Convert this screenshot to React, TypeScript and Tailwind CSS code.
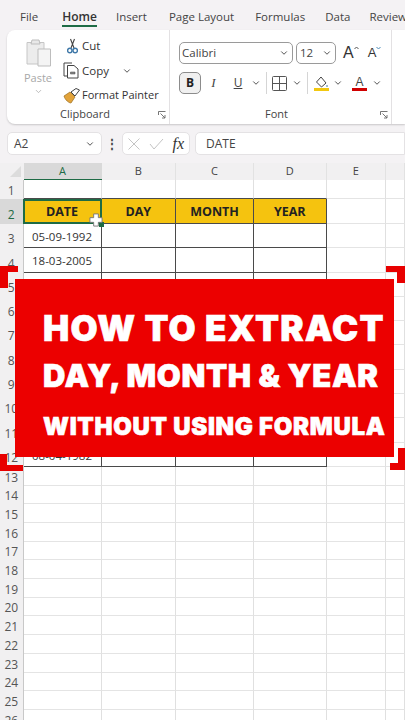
import { ChevronDown } from "lucide-react";

const font = "font-['Open_Sans',sans-serif]";

const rows = [
  { n: 1, h: "h-[19px]" },
  { n: 2, h: "h-[25px]", text: ["DATE", "DAY", "MONTH", "YEAR"] },
  { n: 3, h: "h-[24.3px]", text: ["05-09-1992"] },
  { n: 4, h: "h-[24.3px]", text: ["18-03-2005"] },
  { n: 5, h: "h-[24.3px]" },
  { n: 6, h: "h-[24.3px]" },
  { n: 7, h: "h-[24.3px]" },
  { n: 8, h: "h-[24.3px]" },
  { n: 9, h: "h-[24.3px]" },
  { n: 10, h: "h-[24.3px]" },
  { n: 11, h: "h-[24.3px]" },
  { n: 12, h: "h-[24.3px]", text: ["08-04-1982"] },
  ...Array.from({ length: 14 }, (_, i) => ({ n: 13 + i, h: "h-[18.7px]" })),
] as { n: number; h: string; text?: string[] }[];

const colWidths = ["w-[78px]", "w-[74.5px]", "w-[78px]", "w-[72.5px]", "w-[59.5px]", "flex-1"];

function Caret({ className = "" }: { className?: string }) {
  return <ChevronDown className={`w-[10px] h-[10px] text-[#444] ${className}`} strokeWidth={2.2} />;
}

function Launcher() {
  return (
    <svg width="8" height="8" viewBox="0 0 8 8" fill="none" stroke="#666" strokeWidth="0.9">
      <path d="M0.5 4V0.5H7.5" />
      <path d="M2.5 2.5L7 7M7 4V7H4" />
    </svg>
  );
}

function Clipboard() {
  return (
    <div className="w-[163px] flex flex-col border-r border-[#e3e1e3]">
      <div className="flex-1 flex">
        <div className="w-[56px] flex flex-col items-center pt-[9px] pl-[6px]">
          <svg width="25" height="28" viewBox="0 0 25 28" fill="none">
            <path d="M1 3.5H18V25H1Z" fill="#ececec" stroke="#c6c6c6" />
            <path d="M6 1H13L14 5H5Z" fill="#e8e8e8" stroke="#bdbdbd" />
            <path d="M12 10H24.5V27H12Z" fill="#f4f4f4" stroke="#bdbdbd" />
          </svg>
          <span className="text-[11px] leading-[14px] mt-[4px] text-[#a8a8a8]">Paste</span>
          <ChevronDown className="w-[9px] h-[9px] mt-[2px] text-[#aaa]" />
        </div>
        <div className="flex flex-col pt-[6px] gap-[4.5px] text-[#333]">
          <div className="flex items-center h-[20px]">
            <div className="w-[19px] flex justify-center">
              <svg width="11" height="16" viewBox="0 0 11 16" fill="none">
                <path d="M3.5 1L7 10M7.5 1L4 10" stroke="#444" strokeWidth="1.1" />
                <circle cx="2.8" cy="12.5" r="2.2" stroke="#3f78a8" strokeWidth="1.4" />
                <circle cx="8.2" cy="12.5" r="2.2" stroke="#3f78a8" strokeWidth="1.4" />
              </svg>
            </div>
            <span className="text-[11.5px]">Cut</span>
          </div>
          <div className="flex items-center h-[20px]">
            <div className="w-[19px]">
              <svg width="16" height="17" viewBox="0 0 16 17" fill="none" stroke="#444">
                <path d="M4 14H1V1H9" />
                <path d="M4.5 3.5H11L15 7V16H4.5Z" />
                <path d="M7.5 10H12V12H7.5Z" fill="#888" strokeWidth="0.5" />
              </svg>
            </div>
            <span className="text-[11.5px]">Copy</span>
            <Caret className="ml-[13px]" />
          </div>
          <div className="flex items-center h-[20px]">
            <div className="w-[19px]">
              <svg width="18" height="17" viewBox="0 0 18 17" fill="none">
                <path d="M1 9L7 5L12 10L8 16C6 16 2 13 1 9Z" fill="#e2a33a" stroke="#9a6b1c" strokeWidth="0.7" />
                <path d="M8 5L13 1.5L16.5 3L12 9Z" fill="#fff" stroke="#444" />
              </svg>
            </div>
            <span className="text-[11px] whitespace-nowrap">Format Painter</span>
          </div>
        </div>
      </div>
      <div className="h-[19px] flex items-center relative pl-[53px] pr-[3px] justify-between text-[#444]">
        <span className="text-[11px]">Clipboard</span>
        <Launcher />
      </div>
    </div>
  );
}

function FontGroup() {
  return (
    <div className="w-[222px] flex flex-col border-r border-[#e3e1e3] pl-[9px]">
      <div className="flex items-center gap-[3px] pt-[12px]">
        <div className="w-[114px] h-[22px] border border-[#9a9a9a] rounded-[5px] bg-white flex items-center justify-between pl-[2px] pr-[3px] text-[11.5px] text-[#444]">
          <span>Calibri</span>
          <Caret />
        </div>
        <div className="w-[40px] h-[22px] border border-[#9a9a9a] rounded-[5px] bg-white flex items-center justify-between pl-[3px] pr-[3px] text-[11.5px] text-[#444]">
          <span>12</span>
          <Caret />
        </div>
        <div className="ml-[4px] flex items-start text-[#333] font-['Liberation_Sans',sans-serif]">
          <span className="text-[16px] leading-[20px]">A</span>
          <svg width="5" height="4" viewBox="0 0 5 4" fill="none" stroke="#555" className="mt-[3px]"><path d="M0.5 3L2.5 1L4.5 3" /></svg>
        </div>
        <div className="ml-[6px] flex items-start text-[#333] font-['Liberation_Sans',sans-serif]">
          <span className="text-[13px] leading-[22px]">A</span>
          <svg width="5" height="4" viewBox="0 0 5 4" fill="none" stroke="#4a8ab8" className="mt-[4px]"><path d="M0.5 1L2.5 3L4.5 1" /></svg>
        </div>
      </div>
      <div className="flex items-center pt-[8px] h-[30px] text-[#444]">
        <div className="w-[22px] h-[22px] border border-[#8c8c8c] rounded-[5px] bg-[#f0f0f0] flex items-center justify-center text-[12px] font-bold text-[#222]">
          B
        </div>
        <span className="w-[23px] ml-[1px] text-center text-[13px] italic font-['Liberation_Serif',serif]">I</span>
        <span className="w-[26px] text-center text-[12px] underline">U</span>
        <Caret />
        <div className="w-px h-[22px] bg-[#d5d5d5] ml-[5px] mr-[5px]" />
        <svg width="15" height="15" viewBox="0 0 15 15" fill="none" stroke="#555">
          <path d="M1.5 .5H13.5Q14.5 .5 14.5 1.5V13.5Q14.5 14.5 13.5 14.5H1.5Q.5 14.5 .5 13.5V1.5Q.5 .5 1.5 .5ZM7.5 .5V14.5M.5 7.5H14.5" />
        </svg>
        <Caret className="ml-[5px]" />
        <div className="w-px h-[22px] bg-[#d5d5d5] ml-[5px] mr-[6px]" />
        <div className="w-[15px] flex flex-col items-center">
          <svg width="13" height="12" viewBox="0 0 13 12" fill="none" stroke="#444">
            <path d="M6 1L11 7L6.5 11L1.5 6Z" />
            <path d="M12 9V11" stroke="#3f78a8" />
          </svg>
          <div className="w-[15px] h-[3px] bg-[#f2c811]" />
        </div>
        <Caret className="ml-[4px]" />
        <div className="w-[15px] ml-[9px] flex flex-col items-center">
          <span className="text-[12px] leading-[12px] font-['Liberation_Sans',sans-serif]">A</span>
          <div className="w-[15px] h-[3px] bg-[#d00000]" />
        </div>
        <Caret className="ml-[5px]" />
      </div>
      <div className="mt-auto h-[19px] flex items-center justify-between pl-[86px] pr-[3px] text-[#444]">
        <span className="text-[11px]">Font</span>
        <Launcher />
      </div>
    </div>
  );
}

function Banner() {
  return (
    <>
      <div className="absolute left-0 top-[266px] w-[18px] h-[22px] border-l-[8px] border-t-[6px] border-[#e80000]" />
      <div className="absolute right-0 top-[266px] w-[19px] h-[17px] border-r-[8px] border-t-[6px] border-[#e80000]" />
      <div className="absolute left-0 top-[454px] w-[23px] h-[17px] border-l-[7px] border-b-[6px] border-[#e80000]" />
      <div className="absolute right-0 top-[448px] w-[15px] h-[22px] border-r-[7px] border-b-[7px] border-[#e80000]" />
      <div className="absolute left-[15px] top-[279px] w-[379px] h-[178px] bg-[#ec0000] text-white font-['Inter',sans-serif] font-black pl-[28px] whitespace-nowrap [-webkit-text-stroke:0.6px_#fff]">
        <div className="text-[35px] leading-[36px] mt-[31px] tracking-[1.2px]">HOW TO EXTRACT</div>
        <div className="text-[31px] leading-[32px] mt-[14px] tracking-[0.65px]">DAY, MONTH &amp; YEAR</div>
        <div className="text-[24px] leading-[26px] mt-[22px] tracking-[0.7px]">WITHOUT USING FORMULA</div>
      </div>
    </>
  );
}

export default function App() {
  return (
    <div className={`${font} relative w-[405px] h-[720px] overflow-hidden bg-[#f4f2f4]`}>
      {/* tabs */}
      <div className="h-[30px] flex items-center text-[11.5px] text-[#444] whitespace-nowrap pl-[20px] pt-[4px]">
        <span>File</span>
        <span className="ml-[24px] relative font-semibold text-[#333] text-[12px]">
          Home
          <span className="absolute left-0 right-0 -bottom-[1px] h-[2px] bg-[#1e6b45]" />
        </span>
        <span className="ml-[19px]">Insert</span>
        <span className="ml-[22px]">Page Layout</span>
        <span className="ml-[21px]">Formulas</span>
        <span className="ml-[20px]">Data</span>
        <span className="ml-[19px]">Review</span>
      </div>

      {/* ribbon */}
      <div className="ml-[7px] h-[94px] bg-white rounded-l-[8px] flex shadow-[0_1px_2px_rgba(0,0,0,0.18)] text-[#333]">
        <Clipboard />
        <FontGroup />
      </div>

      {/* formula bar */}
      <div className="h-[23px] mt-[8px] flex items-center text-[12px] text-[#444]">
        <div className="ml-[7px] w-[95px] h-[23px] bg-white border border-[#e4e2e4] rounded-[5px] flex items-center justify-between px-[6px]">
          <span>A2</span>
          <Caret />
        </div>
        <span className="w-[20px] text-center font-bold leading-none">⋮</span>
        <div className="w-[68px] h-[23px] bg-white border border-[#e4e2e4] rounded-[5px] flex items-center justify-between px-[5px]">
          <svg width="12" height="12" viewBox="0 0 12 12" fill="none" stroke="#c4c4c4"><path d="M.5 .5L11.5 11.5M11.5 .5L.5 11.5" /></svg>
          <svg width="15" height="12" viewBox="0 0 15 12" fill="none" stroke="#c4c4c4"><path d="M1 6L5 11L14 1" /></svg>
          <span className="text-[16px] italic font-['Liberation_Serif',serif] text-[#333]">fx</span>
        </div>
        <div className="ml-[5px] flex-1 h-[23px] bg-white border border-[#e4e2e4] rounded-l-[5px] flex items-center pl-[10px]">
          DATE
        </div>
      </div>

      {/* sheet */}
      <div className="mt-[8px] text-[#444]">
        <div className="flex h-[17px] bg-[#f1f0f1] text-[11px]">
          <div className="w-[23.5px] flex items-end justify-end pr-[3px] pb-[3px]">
            <svg width="11" height="11" viewBox="0 0 11 11"><path d="M11 0V11H0Z" fill="#dcdcdc" /></svg>
          </div>
          {["A", "B", "C", "D", "E", ""].map((c, i) => (
            <div
              key={c}
              className={`${colWidths[i]} flex items-center justify-center ${
                i === 0 ? "bg-[#d9d9d9] border-b-[1.5px] border-[#1e6b45] text-[#1e6b45]" : "border-r border-[#e2e2e2]"
              }`}
            >
              {c}
            </div>
          ))}
        </div>
        {rows.map((r) => {
          const inTable = r.n >= 2 && r.n <= 12;
          return (
            <div key={r.n} className={`flex ${r.h}`}>
              <div
                className={`w-[23.5px] flex items-end justify-center text-[12px] leading-[12px] border-r border-[#c8c8c8] ${
                  inTable ? "pb-[3px]" : "pb-[2px]"
                } ${r.n === 2 ? "bg-[#d9d9d9] text-[#1e6b45]" : "bg-[#f1f0f1] text-[#555]"}`}
              >
                {r.n}
              </div>
              {colWidths.map((w, i) => {
                const boxed = i < 4 && (inTable || r.n === 1);
                return (
                  <div
                    key={w + i}
                    className={`${w} flex items-center justify-center pt-[2px] border-b ${
                      boxed ? "border-b-[#4a4a4a]" : "border-b-[#e4e4e4]"
                    } border-r ${i < 4 && inTable ? "border-r-[#4a4a4a]" : "border-r-[#e0e0e0]"} ${
                      r.n === 2 && i < 4
                        ? "bg-[#f5c30f] font-bold text-[#222] text-[12.5px]"
                        : "bg-white text-[11.5px] text-[#333]"
                    }`}
                  >
                    {r.text?.[i]}
                  </div>
                );
              })}
            </div>
          );
        })}
      </div>

      {/* selected cell and cursor */}
      <div className="absolute left-[23px] top-[199px] w-[79px] h-[25px] border-2 border-[#1e6b45]" />
      <div className="absolute left-[99px] top-[222px] w-[5px] h-[5px] bg-[#1e6b45]" />
      <svg className="absolute left-[89px] top-[213px]" width="14" height="14" viewBox="0 0 15 15">
        <path d="M5 1H10V5H14V10H10V14H5V10H1V5H5Z" fill="#fff" stroke="#777" strokeWidth="1" />
      </svg>

      <Banner />
    </div>
  );
}
